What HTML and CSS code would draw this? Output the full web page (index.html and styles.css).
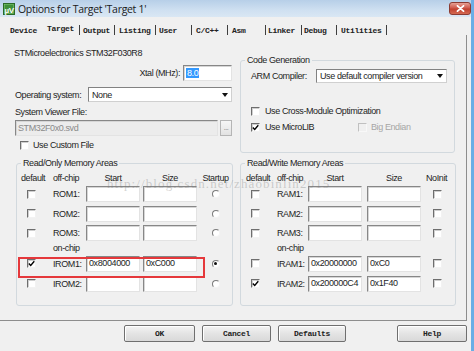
FILE: index.html
```html
<!DOCTYPE html>
<html>
<head>
<meta charset="utf-8">
<link rel="stylesheet" href="styles.css">
</head>
<body>
<div class="window">
  <div class="titlebar">
    <svg class="appicon" width="12" height="12" viewBox="0 0 12 12">
      <rect x="0.5" y="0.5" width="11" height="11" fill="#3f8f3a" stroke="#2a6a28"/>
      <rect x="1.5" y="1.5" width="9" height="9" fill="none" stroke="#7cc46f" stroke-width="0.6"/>
      <text x="6" y="9.5" font-family="Liberation Sans" font-size="8" font-weight="bold" fill="#fff" text-anchor="middle">µV</text>
    </svg>
    <span class="title">Options for Target 'Target 1'</span>
    <div class="close">
      <svg width="9" height="7" viewBox="0 0 9 7"><path d="M1.5 0.8 L7.5 6.2 M7.5 0.8 L1.5 6.2" stroke="#fff" stroke-width="1.8" stroke-linecap="round"/></svg>
    </div>
  </div>

  <div class="tabs">
    <span class="tab t-device"><span>Device</span></span>
    <span class="tab t-target active"><span>Target</span></span>
    <span class="tab t-output"><span>Output</span></span>
    <span class="tab t-listing"><span>Listing</span></span>
    <span class="tab t-user"><span>User</span></span>
    <span class="tab t-cc"><span>C/C++</span></span>
    <span class="tab t-asm"><span>Asm</span></span>
    <span class="tab t-linker"><span>Linker</span></span>
    <span class="tab t-debug"><span>Debug</span></span>
    <span class="tab t-util"><span>Utilities</span></span>
  </div>

  <div class="page">
    <div class="top">
      <div class="leftcol">
        <div class="row-device">STMicroelectronics STM32F030R8</div>
        <div class="row-xtal">
          <span>Xtal (MHz):</span>
          <div class="tb xtal"><span class="sel">8.0</span></div>
        </div>
        <div class="row-os">
          <span>Operating system:</span>
          <div class="combo os"><span>None</span><span class="arrow"></span></div>
        </div>
        <div class="row-svlabel">System Viewer File:</div>
        <div class="row-svfile">
          <div class="tb disabled svfile">STM32F0x0.svd</div>
          <div class="browse">...</div>
        </div>
        <div class="row-custom">
          <span class="cb"></span><span>Use Custom File</span>
        </div>
      </div>

      <fieldset class="group codegen">
        <legend>Code Generation</legend>
        <div class="row-arm">
          <span>ARM Compiler:</span>
          <div class="combo arm"><span>Use default compiler version</span><span class="arrow"></span></div>
        </div>
        <div class="row-check cross">
          <span class="cb"></span><span>Use Cross-Module Optimization</span>
        </div>
        <div class="row-check micro">
          <span class="chk-item first"><span class="cb checked"><svg width="7" height="7" viewBox="0 0 7 7"><path d="M0.8 3.4 L2.7 5.4 L6.3 1.2" fill="none" stroke="#000" stroke-width="1.4"/></svg></span><span>Use MicroLIB</span></span>
          <span class="chk-item dis"><span class="cb off"></span><span>Big Endian</span></span>
        </div>
      </fieldset>
    </div>

    <div class="mem">
      <fieldset class="group ro">
        <legend>Read/Only Memory Areas</legend>
        <div class="memgrid rogrid">
          <span class="h h-default">default</span>
          <span class="h h-off">off-chip</span>
          <span class="h h-c">Start</span>
          <span class="h h-c">Size</span>
          <span class="h h-c">Startup</span>

          <span class="cb"></span><span class="lbl">ROM1:</span><div class="tb"></div><div class="tb"></div><span class="rb"></span>
          <span class="cb"></span><span class="lbl">ROM2:</span><div class="tb"></div><div class="tb"></div><span class="rb"></span>
          <span class="cb"></span><span class="lbl">ROM3:</span><div class="tb"></div><div class="tb"></div><span class="rb"></span>

          <span></span><span class="lbl onchip">on-chip</span><span></span><span></span><span></span>

          <span class="cb checked"><svg width="7" height="7" viewBox="0 0 7 7"><path d="M0.8 3.4 L2.7 5.4 L6.3 1.2" fill="none" stroke="#000" stroke-width="1.4"/></svg></span><span class="lbl">IROM1:</span><div class="tb">0x8004000</div><div class="tb">0xC000</div><span class="rb on"></span>
          <span class="cb"></span><span class="lbl">IROM2:</span><div class="tb"></div><div class="tb"></div><span class="rb"></span>
        </div>
      </fieldset>

      <fieldset class="group rw">
        <legend>Read/Write Memory Areas</legend>
        <div class="memgrid rwgrid">
          <span class="h h-default">default</span>
          <span class="h h-off">off-chip</span>
          <span class="h h-c">Start</span>
          <span class="h h-c">Size</span>
          <span class="h h-noinit">NoInit</span>

          <span class="cb"></span><span class="lbl">RAM1:</span><div class="tb"></div><div class="tb"></div><span class="cb ni"></span>
          <span class="cb"></span><span class="lbl">RAM2:</span><div class="tb"></div><div class="tb"></div><span class="cb ni"></span>
          <span class="cb"></span><span class="lbl">RAM3:</span><div class="tb"></div><div class="tb"></div><span class="cb ni"></span>

          <span></span><span class="lbl onchip">on-chip</span><span></span><span></span><span></span>

          <span class="cb"></span><span class="lbl">IRAM1:</span><div class="tb">0x20000000</div><div class="tb">0xC0</div><span class="cb ni"></span>
          <span class="cb checked"><svg width="7" height="7" viewBox="0 0 7 7"><path d="M0.8 3.4 L2.7 5.4 L6.3 1.2" fill="none" stroke="#000" stroke-width="1.4"/></svg></span><span class="lbl">IRAM2:</span><div class="tb">0x200000C4</div><div class="tb">0x1F40</div><span class="cb ni"></span>
        </div>
      </fieldset>
    </div>
  </div>

  <div class="buttons">
    <div class="btn b-ok">OK</div>
    <div class="btn b-cancel">Cancel</div>
    <div class="btn b-defaults">Defaults</div>
    <div class="btn b-help">Help</div>
  </div>

  <div class="watermark">http://blog.csdn.net/zhaobinlin2015</div>
  <div class="annot"></div>
</div>
</body>
</html>
```

FILE: styles.css
```css
* { box-sizing: border-box; }

html, body {
  margin: 0;
  padding: 0;
  background: #f0f0f0;
}

body {
  width: 474px;
  height: 351px;
  overflow: hidden;
  font-family: "Liberation Sans", Arial, sans-serif;
  font-size: 9px;
  letter-spacing: -0.4px;
  color: #1e1e1e;
}

.window {
  position: relative;
  width: 474px;
  height: 351px;
  background: #f0f0f0;
  border-right: 3px solid #6aaee6;
  overflow: hidden;
}

/* ---------- title bar ---------- */
.titlebar {
  height: 17px;
  display: flex;
  align-items: center;
  padding-left: 3px;
  background: linear-gradient(#b7cfe8, #cfe0f1 60%, #d9e7f4);
}

.appicon { display: block; flex: none; }

.title {
  margin-left: 3px;
  font-family: "Open Sans", "Liberation Sans", sans-serif;
  font-size: 10.5px;
  letter-spacing: -0.3px;
  color: #1a1a1a;
}

.close {
  margin-left: auto;
  margin-right: 0;
  width: 22px;
  height: 13px;
  display: flex;
  align-items: center;
  justify-content: center;
  border: 1px solid #8b3b32;
  border-radius: 3px;
  background: linear-gradient(#e6a195, #cf5a4c 45%, #c1412f 55%, #d46a52);
}
.close svg { display: block; }

/* ---------- tabs ---------- */
.tabs {
  height: 18px;
  display: flex;
  padding-left: 5px;
}

.tab {
  margin-top: 8px;
  height: 10px;
  display: flex;
  align-items: center;
  padding-left: 4px;
  border-right: 1px solid #3e3e3e;
  font-family: "Liberation Mono", "DejaVu Sans Mono", monospace;
  font-weight: bold;
  font-size: 8px;
  letter-spacing: -0.3px;
  color: #222;
  white-space: nowrap;
}
.tab.active span { margin-bottom: 4px; }

.t-device  { width: 37px; border-right-color: transparent; padding-left: 5px; }
.t-target  { width: 38px; padding-left: 5px; }
.t-output  { width: 35px; padding-left: 3px; }
.t-listing { width: 41px; }
.t-user    { width: 36px; padding-left: 3px; }
.t-cc      { width: 36px; }
.t-asm     { width: 38px; }
.t-linker  { width: 36px; padding-left: 2px; }
.t-debug   { width: 35px; padding-left: 2px; }
.t-util    { width: 50px; }

/* ---------- tab page ---------- */
.page {
  width: 467px;
  height: 286px;
  padding: 10px 0 0 14px;
  border-right: 1px solid #8d8d8d;
  border-bottom: 1px solid #8d8d8d;
}

.top {
  display: flex;
  align-items: flex-start;
}

.leftcol {
  width: 218px;
  flex: none;
}

.row-device {
  height: 16px;
  line-height: 16px;
  padding-left: 0;
}

.row-xtal {
  margin-top: 4px;
  height: 16px;
  display: flex;
  align-items: center;
  justify-content: flex-end;
  gap: 3px;
}

.row-os {
  margin-top: 6px;
  height: 15px;
  display: flex;
  align-items: center;
  padding-left: 1px;
}

.row-svlabel {
  margin-top: 4px;
  height: 12px;
  line-height: 12px;
  padding-left: 1px;
}

.row-svfile {
  margin-top: 2px;
  height: 16px;
  display: flex;
  gap: 2px;
  padding-left: 1px;
}

.row-custom {
  margin-top: 3px;
  height: 12px;
  display: flex;
  align-items: center;
  gap: 4px;
  padding-left: 6px;
}

/* text boxes */
.tb {
  height: 16px;
  background: #fff;
  border: 1px solid;
  border-color: #878787 #e3e3e3 #e3e3e3 #878787;
  box-shadow: inset 1px 1px 0 #d6d6d6;
  padding: 1px 0 0 2px;
  line-height: 11px;
  white-space: nowrap;
  overflow: hidden;
}

.xtal {
  width: 49px;
  padding-top: 2px;
}
.sel {
  background: #3399ff;
  color: #fff;
  padding: 0 1px;
}

.svfile {
  width: 203px;
  background: #ececec;
  color: #8a8a8a;
  padding-top: 2px;
}

.browse {
  width: 12px;
  height: 16px;
  border: 1px solid #b5b5b5;
  background: linear-gradient(#f6f6f6, #e2e2e2);
  font-size: 7px;
  color: #777;
  text-align: center;
  line-height: 14px;
}

/* combo boxes */
.combo {
  height: 15px;
  display: flex;
  align-items: center;
  padding-left: 3px;
  background: #fff;
  border: 1px solid;
  border-color: #828282 #d0d0d0 #d0d0d0 #828282;
  white-space: nowrap;
}
.combo .arrow {
  margin-left: auto;
  margin-right: 3px;
  width: 0;
  height: 0;
  border-left: 3px solid transparent;
  border-right: 3px solid transparent;
  border-top: 4px solid #111;
}

.os {
  margin-left: auto;
  width: 144px;
}

.arm {
  width: 131px;
  height: 14px;
  margin-left: auto;
  margin-right: 7px;
}

/* checkboxes / radios */
.cb {
  width: 9px;
  height: 9px;
  flex: none;
  display: flex;
  align-items: center;
  justify-content: center;
  background: #fff;
  border: 1px solid;
  border-color: #6e6e6e #f2f2f2 #f2f2f2 #6e6e6e;
  box-shadow: inset 1px 1px 0 #cfcfcf;
}
.cb svg { display: block; }
.cb.off {
  background: #f0f0f0;
  border-color: #c0c0c0 #f8f8f8 #f8f8f8 #c0c0c0;
  box-shadow: none;
}

.rb {
  width: 8px;
  height: 8px;
  border-radius: 50%;
  border: 1px solid;
  border-color: #7a7a7a #f4f4f4 #f4f4f4 #7a7a7a;
  background: #fff;
  display: flex;
  align-items: center;
  justify-content: center;
}
.rb.on::after {
  content: "";
  width: 3px;
  height: 3px;
  border-radius: 50%;
  background: #111;
}

/* group boxes */
.group {
  margin: 0;
  padding: 0;
  border: 1px solid #d2d9de;
  border-radius: 3px;
  min-width: 0;
}
.group legend {
  margin-left: 4px;
  padding: 0 2px;
  font-size: 9px;
  line-height: 11px;
}

.codegen {
  margin: 10px 0 0 8px;
  width: 215px;
  height: 98px;
}

.row-arm {
  margin-top: 3px;
  height: 14px;
  display: flex;
  align-items: center;
  padding-left: 10px;
}

.row-check {
  height: 12px;
  display: flex;
  align-items: center;
  padding-left: 10px;
}
.row-check.cross { margin-top: 22px; gap: 5px; }
.row-check.micro { margin-top: 4px; }

.chk-item {
  display: flex;
  align-items: center;
  gap: 5px;
}
.chk-item.first { width: 107px; }
.chk-item.dis { gap: 4px; color: #a6a6a6; }

/* memory areas */
.mem {
  display: flex;
  margin-top: 5px;
}

.ro {
  margin-left: 2px;
  width: 217px;
  height: 148px;
}
.rw {
  margin-left: 7px;
  width: 216px;
  height: 148px;
}

.memgrid {
  display: grid;
  grid-template-rows: 12px 20px 19px 20px 10px 21px 19px;
  align-items: center;
  margin-top: 3px;
}
.rogrid {
  grid-template-columns: 33px 30px 54px 54px 31px;
  column-gap: 3px;
}
.rwgrid {
  grid-template-columns: 31px 26px 54px 54px 28px;
  column-gap: 5px;
}

.memgrid .tb { height: 16px; padding-top: 1px; }
.memgrid .cb { margin-left: 10px; }
.memgrid .cb.ni { margin-left: 7px; }
.memgrid .rb { justify-self: center; }

.h { white-space: nowrap; line-height: 12px; }
.h-c { text-align: center; }
.rogrid .h-default { padding-left: 4px; }
.rwgrid .h-default { padding-left: 5px; }
.h-noinit { padding-left: 0; }
.lbl { white-space: nowrap; }
.onchip { line-height: 10px; }

/* bottom buttons */
.buttons {
  display: flex;
  padding: 4px 0 0 124px;
}

.btn {
  height: 17px;
  border: 1px solid #6f6f6f;
  border-radius: 2px;
  background: linear-gradient(#f4f4f4, #e4e4e4 50%, #d9d9d9);
  box-shadow: inset 1px 1px 0 #ffffff;
  font-family: "Liberation Mono", "DejaVu Sans Mono", monospace;
  font-weight: bold;
  font-size: 8px;
  letter-spacing: -0.3px;
  line-height: 15px;
  text-align: center;
  color: #222;
}
.b-ok { width: 71px; }
.b-cancel { width: 69px; margin-left: 7px; }
.b-defaults { width: 68px; margin-left: 7px; }
.b-help { width: 70px; margin-left: 51px; }

/* overlays: blog watermark and red annotation box */
.watermark {
  position: absolute;
  left: 107px;
  top: 176px;
  font-family: "Liberation Serif", serif;
  font-size: 13px;
  letter-spacing: 1.1px;
  color: rgba(120, 120, 120, 0.34);
  white-space: nowrap;
  pointer-events: none;
}

.annot {
  position: absolute;
  left: 18px;
  top: 257px;
  width: 187px;
  height: 21px;
  border: 2px solid #e5383b;
}
```
